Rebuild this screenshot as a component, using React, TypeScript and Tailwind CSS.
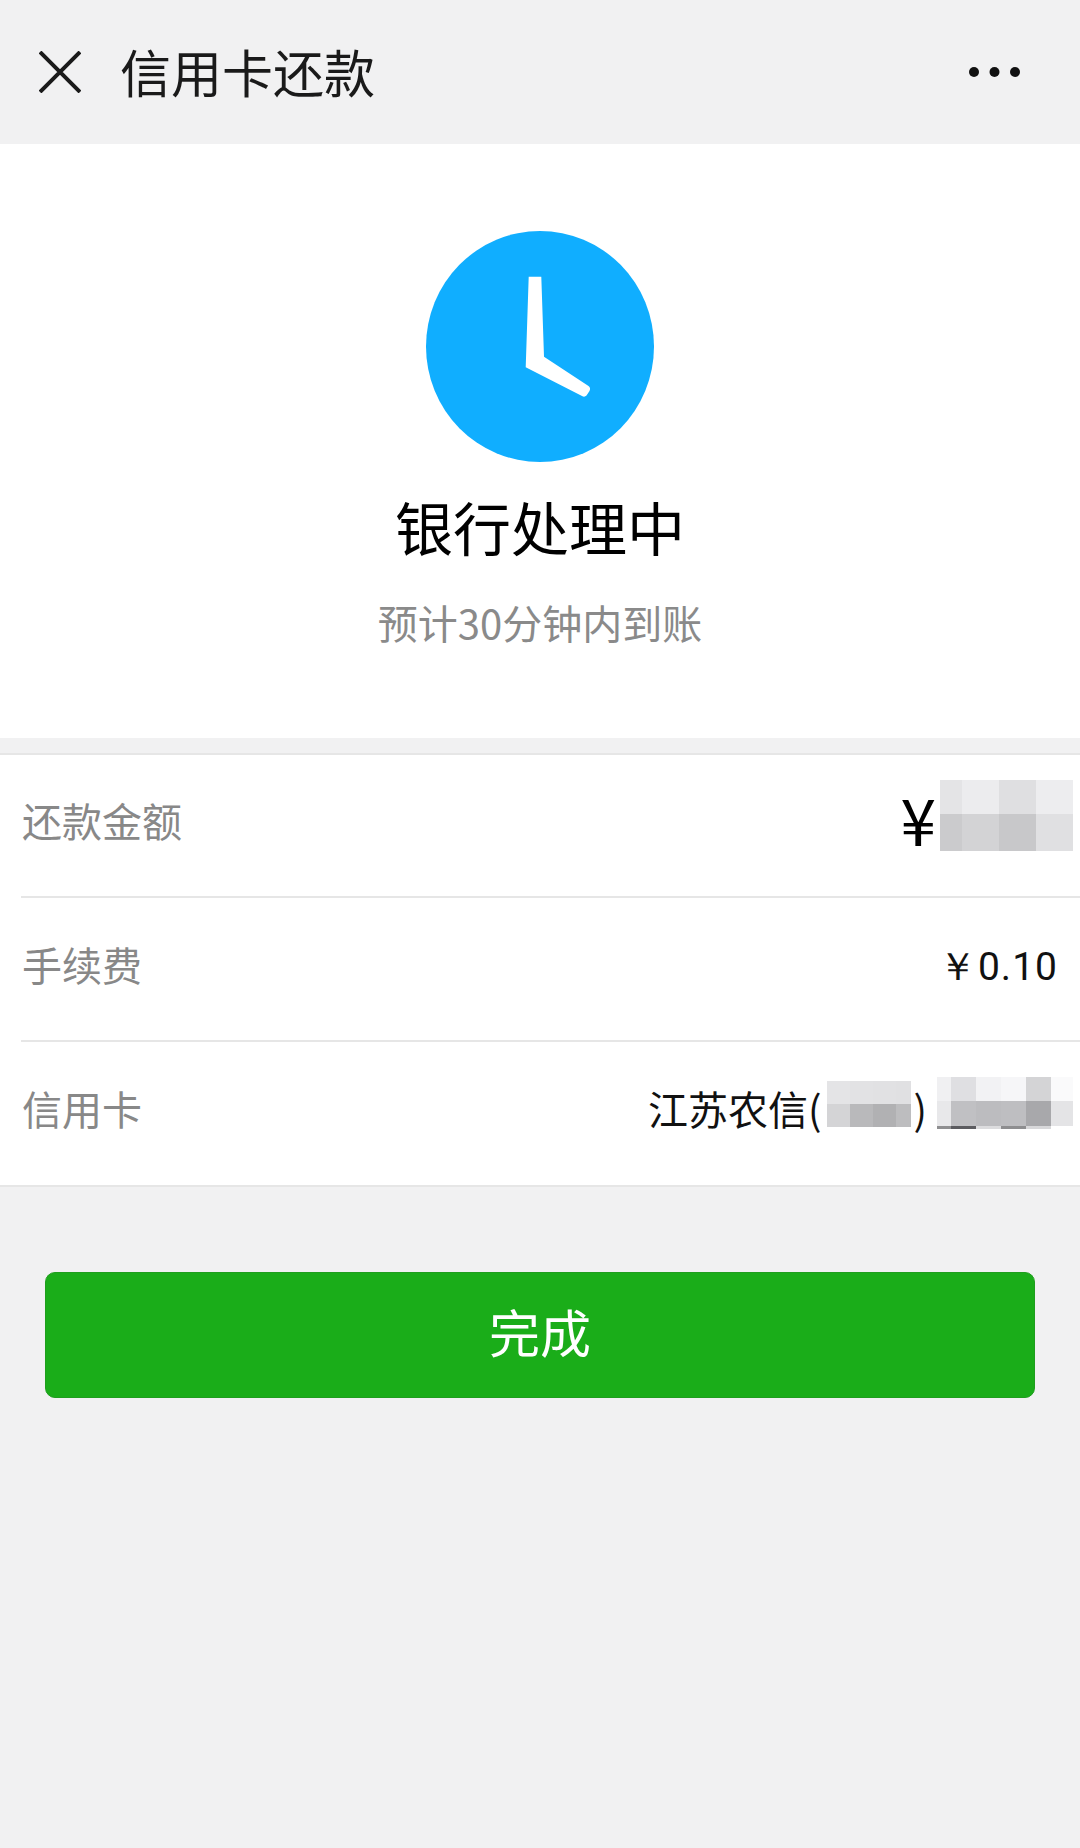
const cjk = "font-['Noto_Sans_CJK_SC','Noto_Sans',sans-serif]";

const amountCells = ["#e4e4e6", "#ececee", "#dfdfe1", "#ededef", "#cbcbcd", "#d3d3d5", "#c8c8ca", "#e0e0e2"];
const bankCells = ["#e4e4e6", "#e2e2e4", "#e1e1e3", "#e0e0e2", "#d4d4d6", "#b9b9bb", "#b1b1b3", "#bdbdbf"];
const nameCells = [
  "#f0f0f2", "#dfdfe2", "#f2f2f4", "#f6f6f8", "#d4d4d6", "#fafafb",
  "#e8e8ea", "#c0c0c3", "#bcbcbf", "#bebec1", "#a8a8ab", "#e4e4e6",
  "#8f8f91", "#5c5c60", "#dcdcde", "#8e8e90", "#d8d8da", "#ffffff",
];

const App = () => {
  return (
    <div className={`${cjk} w-[1080px] h-[1848px] bg-[#f1f1f2] overflow-hidden`}>
      {/* header */}
      <div className="h-[144px] flex items-center pl-[39px] pr-[59px]">
        <svg width="42" height="42" viewBox="0 0 42 42" className="shrink-0">
          <path d="M1 1 L41 41 M41 1 L1 41" stroke="#1a1a1a" strokeWidth="4" fill="none" />
        </svg>
        <div className="ml-[39px] mb-[2px] text-[51px] leading-[50px] text-[#1a1a1a]">信用卡还款</div>
        <svg width="52" height="10" viewBox="0 0 52 10" className="ml-auto shrink-0">
          <circle cx="5" cy="5" r="5" fill="#111" />
          <circle cx="25.5" cy="5" r="5" fill="#111" />
          <circle cx="46" cy="5" r="5" fill="#111" />
        </svg>
      </div>

      {/* status */}
      <div className="h-[594px] bg-white flex flex-col items-center pt-[87px]">
        <svg width="228" height="231" viewBox="1 0 228 231" className="shrink-0">
          <ellipse cx="115" cy="115.5" rx="114" ry="115.5" fill="#10aeff" />
          <path
            d="M103.7 45.7 L116.3 45.7 L119 125.7 L163.5 155 Q166 157 164.5 160 L161.5 164.5 Q159.5 166.5 157 165 L100.7 136.3 Z"
            fill="#fff"
          />
        </svg>
        <div className="mt-[36px] text-[58px] leading-[56px] text-black">银行处理中</div>
        <div className="mt-[48px] text-[40px] leading-[40px] text-[#8a8a8a]">预计30分钟内到账</div>
      </div>

      {/* details */}
      <div className="mt-[15px] bg-white border-t-2 border-b-2 border-[#e6e6e6]">
        <div className="ml-[21px] h-[143px] border-b-2 border-[#e6e6e6] flex items-center justify-between pr-[7px]">
          <span className="ml-px mb-[12px] text-[40px] leading-[40px] text-[#888888]">还款金额</span>
          <div className="flex items-center">
            <span className="mb-[16px] text-[64px] leading-[66px] text-black">¥</span>
            <div className="ml-[4px] mb-[20px] w-[133px] h-[71px] grid grid-cols-[22px_37px_37px_37px] grid-rows-[34px_37px]">
              {amountCells.map((c, i) => (
                <div key={i} style={{ backgroundColor: c }} />
              ))}
            </div>
          </div>
        </div>

        <div className="ml-[21px] h-[144px] border-b-2 border-[#e6e6e6] flex items-center justify-between pr-[22px]">
          <span className="ml-px mb-[10px] text-[40px] leading-[40px] text-[#888888]">手续费</span>
          <span className="mb-[4px] text-[39px] leading-[40px] text-[#111] font-['Roboto',sans-serif] tracking-[1px]">￥0.10</span>
        </div>

        <div className="ml-[21px] h-[143px] flex items-center justify-between pr-[7px]">
          <span className="ml-px mb-[12px] text-[40px] leading-[40px] text-[#888888]">信用卡</span>
          <div className="flex items-center">
            <span className="mb-[12px] text-[40px] leading-[40px] text-[#111]">江苏农信(</span>
            <div className="ml-[6px] mb-[20px] w-[84px] h-[46px] grid grid-cols-[23px_23px_23px_15px] grid-rows-2">
              {bankCells.map((c, i) => (
                <div key={i} style={{ backgroundColor: c }} />
              ))}
            </div>
            <span className="ml-[2px] mb-[12px] text-[40px] leading-[40px] text-[#111]">)</span>
            <div className="ml-[10px] mb-[22px] w-[136px] h-[52px] grid grid-cols-[14px_25px_25px_25px_25px_22px] grid-rows-[24px_25px_3px]">
              {nameCells.map((c, i) => (
                <div key={i} style={{ backgroundColor: c }} />
              ))}
            </div>
          </div>
        </div>
      </div>

      {/* action */}
      <div className="mt-[85px] px-[45px]">
        <button className="w-full h-[126px] rounded-[10px] border border-[#1f9e1e] bg-[#1aad19] text-white text-[51px] leading-[50px] pb-[8px] flex items-center justify-center">
          完成
        </button>
      </div>
    </div>
  );
};

export default App;
